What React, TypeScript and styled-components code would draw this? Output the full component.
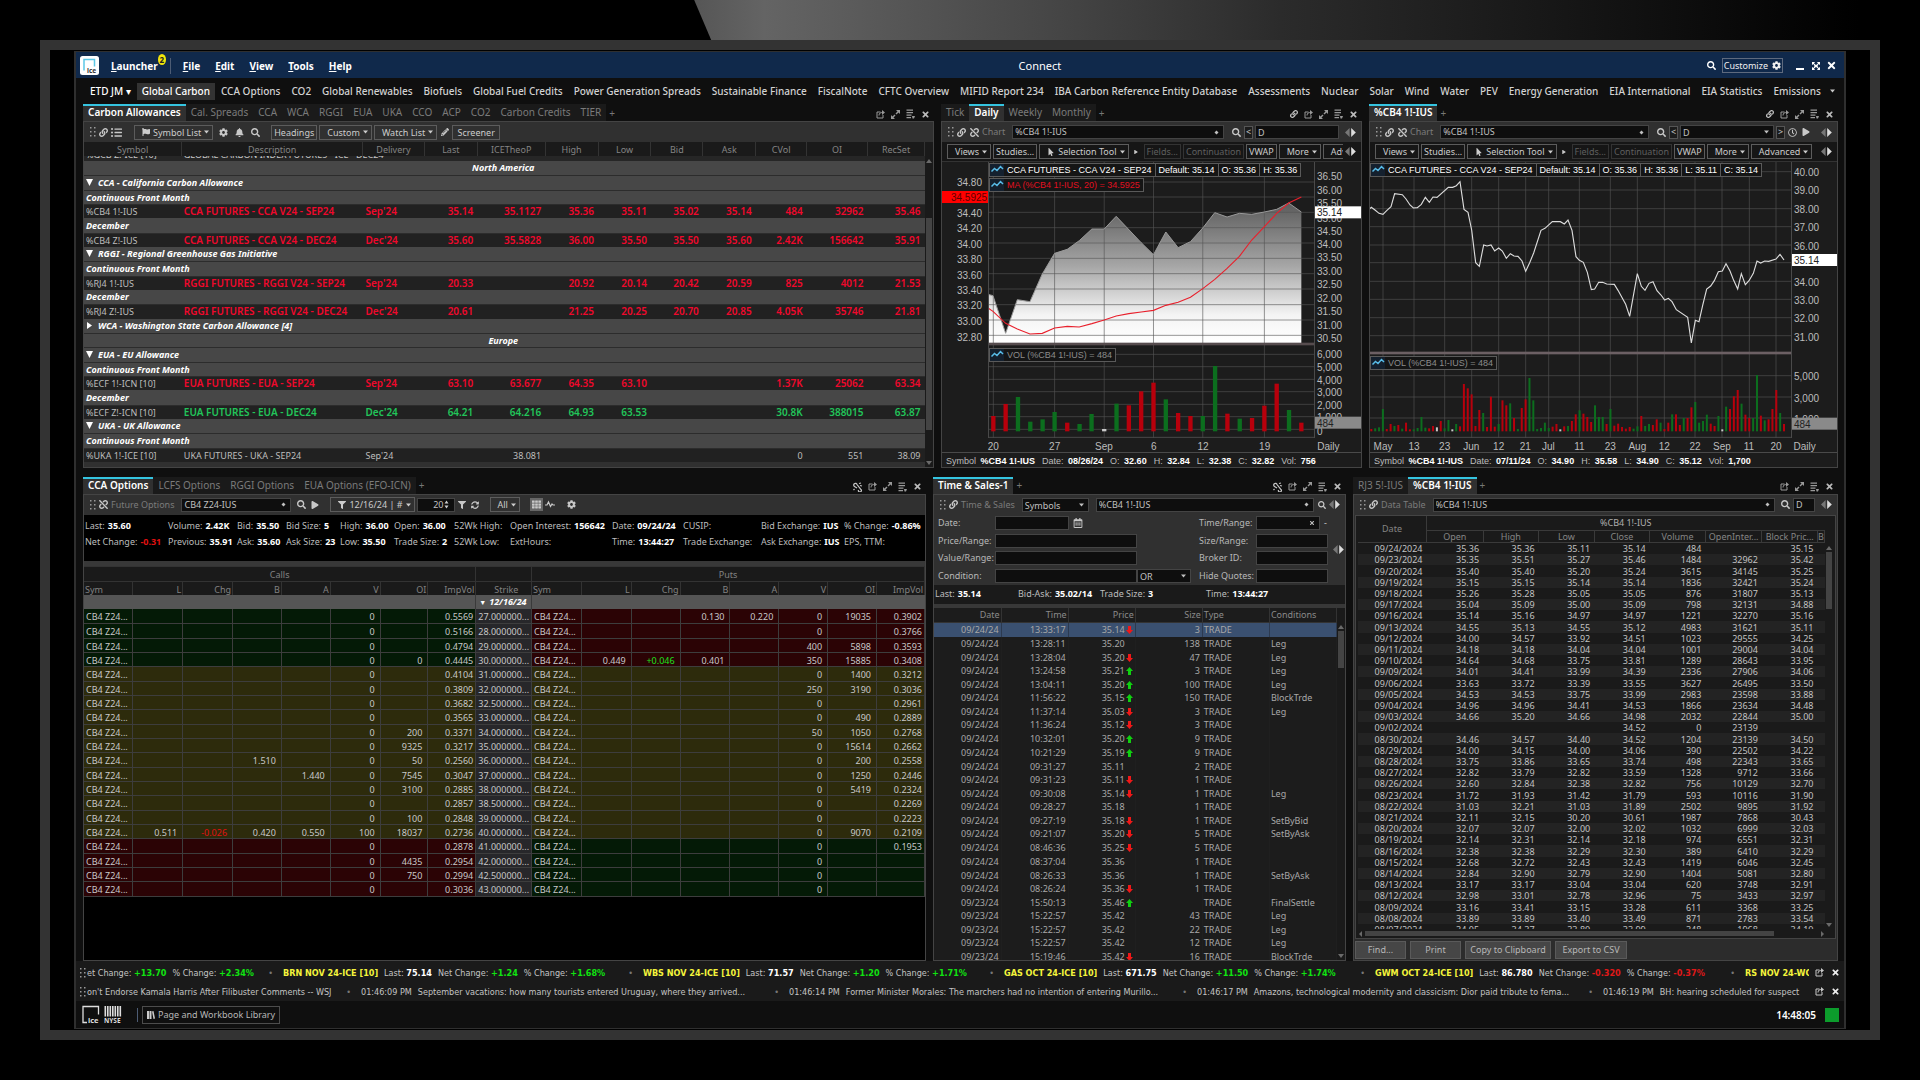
import React from "react";
import styled, { createGlobalStyle, css } from "styled-components";
import {
  FaSearch, FaCog, FaFlag, FaBell, FaPencilAlt, FaFilter, FaMousePointer, FaSyncAlt,
  FaLink, FaUnlink, FaRegClock, FaPlay, FaRegCalendarAlt, FaListUl, FaTh, FaTimes,
} from "react-icons/fa";

const ui = `"Noto Sans", "Open Sans", sans-serif`;
const plain = `"Liberation Sans", Arial, sans-serif`;
const tape = `"DejaVu Sans Condensed", "DejaVu Sans", sans-serif`;

const Global = createGlobalStyle`
  *, *::before, *::after { box-sizing: border-box; }
  html, body { margin: 0; background: #000; }
  body { font: 9px/14px ${ui}; color: #c8c8c8; overflow: hidden; }
  button, input, select { font: inherit; color: inherit; margin: 0; border-radius: 0; outline: none; }
  button { cursor: pointer; }
  table { border-collapse: collapse; table-layout: fixed; width: 100%; }
  th { font-weight: 400; }
  td, th { padding: 0; white-space: nowrap; overflow: hidden; }
  svg { flex: none; display: block; }
`;

/* ---------- shell ---------- */

const Sheen = styled.div`
  height: 40px;
  margin-left: 36%;
  clip-path: polygon(3px 0, 100% 0, 100% 100%, 20px 100%);
  background: linear-gradient(90deg, #555 0%, #646464 6%, #454545 30%, #2b2b2b 48%, #0e0e0e 80%, #000 95%);
`;
const Bezel = styled.div`
  height: calc(100vh - 80px);
  margin: 0 40px 40px;
  border: 10px solid #333;
  padding: 1px 24px;
  background: #000;
`;
const Win = styled.div`
  height: 100%;
  display: flex;
  flex-direction: column;
  border: 1px solid #2f2f2f;
  border-width: 1px 2px;
  background: #0f0f0f;
`;
const TitleBar = styled.header`
  flex: 0 0 26px;
  display: grid;
  grid-template-columns: 121fr auto 100fr;
  align-items: center;
  background: #10294b;
  color: #fff;
  padding: 1px 7px 0 4px;
`;
const MenuRow = styled.nav<{ $gap: number }>`
  display: flex;
  align-items: center;
  gap: ${(p) => p.$gap}px;
`;
const MenuButton = styled.button`
  background: none;
  border: 0;
  padding: 0;
  font-size: 10px;
  font-weight: 700;
  color: #fff;
  position: relative;
  &::first-letter { text-decoration: underline; }
`;
const Count = styled.span`
  position: absolute;
  top: -5px;
  left: 100%;
  width: 8px;
  height: 11px;
  border-radius: 50%;
  background: #f2e60a;
  color: #222;
  font: 700 8px/11px ${ui};
  text-align: center;
`;
const Rule = styled.span<{ $h?: number }>`
  width: 1px;
  height: ${(p) => p.$h ?? 16}px;
  background: #4d5c74;
`;
const AppTitle = styled.h1`
  margin: 0;
  font-size: 11px;
  font-weight: 400;
`;
const TitleTools = styled.div`
  display: flex;
  justify-content: flex-end;
  align-items: center;
  gap: 5px;
`;
const Customize = styled.button`
  display: flex;
  align-items: center;
  gap: 4px;
  height: 15px;
  padding: 0 1px;
  margin-right: 6px;
  background: none;
  border: 1px solid #5e6a7e;
  color: #f0f0f0;
`;
const IconButton = styled.button<{ $tone?: string }>`
  display: inline-flex;
  align-items: center;
  justify-content: center;
  flex: none;
  min-width: 11px;
  height: 13px;
  padding: 0;
  border: 0;
  background: none;
  color: ${(p) => p.$tone ?? "#c8c8c8"};
`;
const Books = styled.nav`
  flex: 0 0 26px;
  display: flex;
  align-items: center;
  justify-content: space-between;
  padding: 0 6px 0 9px;
`;
const Book = styled.button<{ $on?: boolean; $lead?: boolean }>`
  height: 17px;
  padding: 0 5px;
  border: 0;
  background: ${(p) => (p.$on ? "#333" : "none")};
  color: ${(p) => (p.$on || p.$lead ? "#fff" : "#d2d2d2")};
  font-size: 10px;
  font-weight: 500;
  white-space: nowrap;
`;
const Desk = styled.main`
  flex: 1 1 0;
  min-height: 0;
  display: flex;
  flex-direction: column;
  gap: 9px;
  padding: 0 6px 0 7px;
`;
const Band = styled.div<{ $grow: number; $cols: string }>`
  flex: ${(p) => p.$grow} 1 0;
  min-height: 0;
  display: grid;
  grid-template-rows: minmax(0, 1fr);
  grid-template-columns: ${(p) => p.$cols};
  gap: 7px;
`;

/* ---------- panel ---------- */

const PanelBox = styled.section`
  min-width: 0;
  display: flex;
  flex-direction: column;
`;
const TabBar = styled.div`
  flex: 0 0 17px;
  display: flex;
  align-items: stretch;
`;
const TabButton = styled.button<{ $on?: boolean }>`
  padding: 0 5px 2px;
  border: 0;
  border-top: 2px solid ${(p) => (p.$on ? "#35c4e0" : "#1a1a1a")};
  background: ${(p) => (p.$on ? "#303030" : "#1a1a1a")};
  color: ${(p) => (p.$on ? "#fff" : "#7a7a7a")};
  font-size: 10px;
  font-weight: ${(p) => (p.$on ? 600 : 400)};
  line-height: 13px;
  white-space: nowrap;
`;
const AddTab = styled.button`
  padding: 0 3px;
  border: 0;
  background: none;
  color: #777;
  font-size: 10px;
`;
const TabTools = styled.div`
  margin-left: auto;
  display: flex;
  align-items: center;
  gap: 4px;
  padding: 3px 3px 0 0;
`;
const PanelBody = styled.div<{ $bg?: string }>`
  flex: 1 1 0;
  min-height: 0;
  display: flex;
  flex-direction: column;
  overflow: hidden;
  border: 1px solid #444;
  background: ${(p) => p.$bg ?? "#1c1c1c"};
`;
const Toolbar = styled.div<{ $dark?: boolean }>`
  flex: 0 0 20px;
  display: flex;
  align-items: center;
  gap: 2px;
  padding: 0 5px;
  background: ${(p) => (p.$dark ? "#161616" : "#303030")};
  ${(p) => p.$dark && css`border-bottom: 1px solid #333;`}
`;
const Spacer = styled.span<{ $w?: number }>`
  flex: ${(p) => (p.$w ? `0 0 ${p.$w}px` : "1 1 0")};
`;
const ToolName = styled.label`
  color: #7b7b7b;
  white-space: nowrap;
  margin-right: 5px;
`;
const ToolButton = styled.button<{ $off?: boolean; $wide?: boolean }>`
  display: inline-flex;
  flex: none;
  align-items: center;
  justify-content: center;
  gap: 3px;
  height: 15px;
  padding: ${(p) => (p.$wide ? "0 3px 0 7px" : "0 2px")};
  border: 1px solid ${(p) => (p.$off ? "#333" : "#5c5c5c")};
  background: none;
  color: ${(p) => (p.$off ? "#5f5f5f" : "#cccccc")};
  white-space: nowrap;
  line-height: 13px;
`;
const FieldBox = styled.span<{ $w?: number }>`
  flex: ${(p) => (p.$w ? `0 0 ${p.$w}px` : "1 1 0")};
  min-width: 0;
  display: flex;
  align-items: center;
  height: 14px;
  padding: 0 4px 0 2px;
  border: 1px solid #444;
  background: #0e0e0e;
  color: #c0c0c0;
`;
const Entry = styled.input`
  flex: 1 1 0;
  width: 100%;
  min-width: 0;
  height: 12px;
  padding: 0;
  border: 0;
  background: none;
`;
const Pick = styled.select`
  appearance: none;
  flex: 1 1 0;
  min-width: 0;
  height: 12px;
  padding: 0;
  border: 0;
  background: #0e0e0e;
`;
const Step = styled.button`
  flex: none;
  width: 9px;
  height: 13px;
  padding: 0;
  border: 1px solid #555;
  background: #1c1c1c;
  line-height: 10px;
`;

const Caret = () => (
  <svg width="5" height="4" viewBox="0 0 5 4"><path d="M0 .5h5L2.5 3.5z" fill="currentColor" /></svg>
);
const Dot = () => (
  <svg width="5" height="5" viewBox="0 0 5 5"><path d="M2.5 .5l2 2-2 2-2-2z" fill="currentColor" /></svg>
);
const Grip = () => (
  <svg width="7" height="10" viewBox="0 0 7 10" fill="#999">
    {[0, 4, 8].map((y) => [1, 5].map((x) => <rect key={`${x}${y}`} x={x} y={y} width="1.5" height="1.5" />))}
  </svg>
);
const Pager = () => (
  <svg width="11" height="9" viewBox="0 0 11 9"><path d="M4.6 0v9L0 4.5z" fill="#777" /><path d="M6.2 0v9l4.6-4.5z" fill="#ddd" /></svg>
);
const Popout = () => (
  <svg width="9" height="9" viewBox="0 0 18 18" fill="none" stroke="currentColor" strokeWidth="2">
    <path d="M9 4H2v12h12v-6" /><path d="M6 11c0-5 3-6 8-6" /><path d="M12 0l6 5-6 5z" fill="currentColor" stroke="none" />
  </svg>
);
const Expand = () => (
  <svg width="9" height="9" viewBox="0 0 18 18" fill="currentColor">
    <path d="M10 0h8v8l-3-3-4 4-2-2 4-4zM8 18H0v-8l3 3 4-4 2 2-4 4z" />
  </svg>
);
const MenuLines = () => (
  <svg width="9" height="10" viewBox="0 0 18 20" fill="currentColor">
    <path d="M1 1h13v2.4H1zM1 6h13v2.4H1zM1 11h10v2.4H1zM1 16h9v2.4H1zM12 14h6l-2 5h-3z" />
  </svg>
);
const Wave = () => (
  <svg width="10" height="9" viewBox="0 0 20 18" fill="none" stroke="currentColor" strokeWidth="2.4"><path d="M0 10h4l3-6 4 9 3-5 2 2h4" /></svg>
);
const ChartMark = () => (
  <svg width="14" height="12" viewBox="0 0 28 24">
    <rect width="28" height="24" fill="#14202e" />
    <path d="M3 15l6-6 5 4 7-8 5 5" fill="none" stroke="#58bce8" strokeWidth="3" />
  </svg>
);
const Scissor = () => (
  <svg width="10" height="10" viewBox="0 0 20 20" fill="none" stroke="currentColor" strokeWidth="2.4">
    <path d="M8 12L3 9a3.4 3.4 0 1 1 5-4l8 10a3 3 0 1 1-5 1" /><path d="M12 3l4-1M14 7l4 1M3 14l-2 2" />
  </svg>
);

interface PanelProps {
  tabs: string[];
  active: number;
  linked?: "link" | "cut";
  bg?: string;
  children: React.ReactNode;
}
const Panel = ({ tabs, active, linked, bg, children }: PanelProps) => (
  <PanelBox>
    <TabBar role="tablist">
      {tabs.map((t, i) => (
        <TabButton key={t} role="tab" aria-selected={i === active} $on={i === active}>{t}</TabButton>
      ))}
      <AddTab aria-label="Add tab">+</AddTab>
      <TabTools>
        {linked === "link" && <IconButton aria-label="Linked"><FaLink size={8} /></IconButton>}
        {linked === "cut" && <IconButton aria-label="Unlinked"><Scissor /></IconButton>}
        <IconButton $tone="#999" aria-label="Pop out"><Popout /></IconButton>
        <IconButton $tone="#999" aria-label="Expand"><Expand /></IconButton>
        <IconButton $tone="#999" aria-label="Panel menu"><MenuLines /></IconButton>
        <IconButton $tone="#bbb" aria-label="Close"><FaTimes size={9} /></IconButton>
      </TabTools>
    </TabBar>
    <PanelBody $bg={bg}>{children}</PanelBody>
  </PanelBox>
);

/* ---------- scrollbars ---------- */

const Scrolled = styled.div`
  flex: 1 1 0;
  min-height: 0;
  display: flex;
  overflow: hidden;
`;
const ScrollArea = styled.div`
  flex: 1 1 0;
  min-width: 0;
  overflow: hidden;
`;
const Track = styled.div<{ $head: number }>`
  flex: 0 0 8px;
  display: flex;
  flex-direction: column;
  align-items: center;
  padding-top: ${(p) => p.$head}px;
  background: #1a1a1a;
  color: #6a6a6a;
`;
const Groove = styled.div`
  flex: 1 1 0;
  width: 6px;
  display: flex;
  flex-direction: column;
`;
const Thumb = styled.div<{ $part: number }>`
  flex: ${(p) => p.$part} 1 0;
  background: #444;
`;
const Gap = styled.div<{ $part: number }>`
  flex: ${(p) => p.$part} 1 0;
`;
const UpMark = () => <svg width="6" height="8" viewBox="0 0 6 8"><path d="M0 6h6L3 2z" fill="currentColor" /></svg>;
const DownMark = () => <svg width="6" height="8" viewBox="0 0 6 8"><path d="M0 2h6L3 6z" fill="currentColor" /></svg>;
const VScroll = ({ head, before, size, after }: { head: number; before: number; size: number; after: number }) => (
  <Track $head={head}>
    <UpMark />
    <Groove>
      <Gap $part={before} />
      <Thumb $part={size} />
      <Gap $part={after} />
    </Groove>
    <DownMark />
  </Track>
);

/* ---------- quote board ---------- */

const Board = styled.table`
  th {
    height: 14px;
    padding-top: 2px;
    line-height: 12px;
    border-right: 1px solid #333;
    background: #1a1a1a;
    color: #848484;
    text-align: center;
  }
`;
type Tone = "up" | "down" | "flat";
const toneColor = { up: "#22c55a", down: "#f0082c", flat: "#bdbdbd" };
const BoardRow = styled.tr<{ $kind: "group" | "quote" | "cut"; $tone?: Tone }>`
  height: 14px;
  &:nth-child(3n) { height: 15px; }
  ${(p) => p.$kind === "group" && css`
    background: #474747;
    color: #fff;
    font-weight: 700;
    font-style: italic;
    border-bottom: 1px solid #2c2c2c;
  `}
  ${(p) => p.$kind === "quote" && css`
    background: #212121;
    color: ${toneColor[p.$tone ?? "flat"]};
    font-weight: ${p.$tone === "flat" ? 400 : 600};
    font-size: ${p.$tone === "flat" ? 9 : 10}px;
  `}
  ${(p) => p.$kind === "cut" && css`
    && { height: 5px; }
    background: #262626;
  `}
  td { line-height: 13px; padding: 0 4px 0 2px; text-align: right; }
  td:first-child, td:nth-child(2) { text-align: left; }
  ${(p) => p.$kind === "quote" && css`
    td:first-child { font-weight: 400; font-size: 9px; color: #bdbdbd; }
  `}
  td:nth-child(3) { text-align: left; padding-left: 3px; }
`;
const Snip = styled.div`
  height: 5px;
  display: flex;
  align-items: flex-end;
  overflow: hidden;
  line-height: 12px;
`;
const GroupCell = styled.td<{ $center?: boolean }>`
  &&&& { text-align: ${(p) => (p.$center ? "center" : "left")}; }
`;
const Twist = styled.span`
  display: inline-block;
  width: 12px;
`;
const DownWedge = () => <svg width="7" height="7" viewBox="0 0 7 7"><path d="M0 0h7L3.500 7z" fill="currentColor" /></svg>;
const SideWedge = () => <svg width="7" height="7" viewBox="0 0 7 7"><path d="M1 0v7l5-3.500z" fill="currentColor" /></svg>;

const boardCols: [string, number][] = [
  ["Symbol", 98], ["Description", 181], ["Delivery", 62], ["Last", 53], ["ICETheoP", 68], ["High", 53],
  ["Low", 53], ["Bid", 52], ["Ask", 53], ["CVol", 51], ["OI", 61], ["RecSet", 57],
];
type BoardLine = { g: string; open?: boolean; center?: boolean } | { q: string[]; t: Tone };
const boardLines: BoardLine[] = [
  { g: "North America", center: true },
  { g: "CCA - California Carbon Allowance", open: true },
  { g: "Continuous Front Month" },
  { t: "down", q: ["%CB4 1!-IUS", "CCA FUTURES - CCA V24 - SEP24", "Sep'24", "35.14", "35.1127", "35.36", "35.11", "35.02", "35.14", "484", "32962", "35.46"] },
  { g: "December" },
  { t: "down", q: ["%CB4 Z!-IUS", "CCA FUTURES - CCA V24 - DEC24", "Dec'24", "35.60", "35.5828", "36.00", "35.50", "35.50", "35.60", "2.42K", "156642", "35.91"] },
  { g: "RGGI - Regional Greenhouse Gas Initiative", open: true },
  { g: "Continuous Front Month" },
  { t: "down", q: ["%RJ4 1!-IUS", "RGGI FUTURES - RGGI V24 - SEP24", "Sep'24", "20.33", "", "20.92", "20.14", "20.42", "20.59", "825", "4012", "21.53"] },
  { g: "December" },
  { t: "down", q: ["%RJ4 Z!-IUS", "RGGI FUTURES - RGGI V24 - DEC24", "Dec'24", "20.61", "", "21.25", "20.25", "20.70", "20.85", "4.05K", "35746", "21.81"] },
  { g: "WCA - Washington State Carbon Allowance [4]", open: false },
  { g: "Europe", center: true },
  { g: "EUA - EU Allowance", open: true },
  { g: "Continuous Front Month" },
  { t: "down", q: ["%ECF 1!-ICN [10]", "EUA FUTURES - EUA - SEP24", "Sep'24", "63.10", "63.677", "64.35", "63.10", "", "", "1.37K", "25062", "63.34"] },
  { g: "December" },
  { t: "up", q: ["%ECF Z!-ICN [10]", "EUA FUTURES - EUA - DEC24", "Dec'24", "64.21", "64.216", "64.93", "63.53", "", "", "30.8K", "388015", "63.87"] },
  { g: "UKA - UK Allowance", open: true },
  { g: "Continuous Front Month" },
  { t: "flat", q: ["%UKA 1!-ICE [10]", "UKA FUTURES - UKA - SEP24", "Sep'24", "", "38.081", "", "", "", "", "0", "551", "38.09"] },
];

const QuoteBoard = () => (
  <Panel tabs={["Carbon Allowances", "Cal. Spreads", "CCA", "WCA", "RGGI", "EUA", "UKA", "CCO", "ACP", "CO2", "Carbon Credits", "TIER"]} active={0} bg="#303030">
    <Toolbar>
      <Grip />
      <IconButton aria-label="Link"><FaLink size={9} /></IconButton>
      <IconButton aria-label="List"><FaListUl size={11} /></IconButton>
      <Spacer $w={8} />
      <ToolButton $wide><FaFlag size={8} />Symbol List<Caret /></ToolButton>
      <Spacer $w={1} />
      <IconButton aria-label="Settings"><FaCog size={9} /></IconButton>
      <Spacer $w={1} />
      <IconButton aria-label="Alerts"><FaBell size={9} /></IconButton>
      <Spacer $w={1} />
      <IconButton aria-label="Search"><FaSearch size={9} /></IconButton>
      <Spacer $w={6} />
      <ToolButton>Headings</ToolButton>
      <ToolButton $wide>Custom<Caret /></ToolButton>
      <ToolButton $wide>Watch List<Caret /></ToolButton>
      <IconButton aria-label="Edit"><FaPencilAlt size={8} /></IconButton>
      <ToolButton>&nbsp;Screener&nbsp;</ToolButton>
    </Toolbar>
    <Scrolled>
      <ScrollArea>
        <Board>
          <colgroup>{boardCols.map(([n, w]) => <col key={n} style={{ width: `${(w / 842) * 100}%` }} />)}</colgroup>
          <thead><tr>{boardCols.map(([n]) => <th key={n} scope="col">{n}</th>)}</tr></thead>
          <tbody>
            <BoardRow $kind="cut">
              <td><Snip>%GCB Z!-ICE [10]</Snip></td>
              <td colSpan={8}><Snip>GLOBAL CARBON INDEX FUTURES - ICE - DEC24</Snip></td>
              <td /><td /><td />
            </BoardRow>
            {boardLines.map((l, i) =>
              "g" in l ? (
                <BoardRow key={i} $kind="group">
                  <GroupCell colSpan={12} $center={l.center}>
                    {l.open !== undefined && <Twist>{l.open ? <DownWedge /> : <SideWedge />}</Twist>}
                    {l.g}
                  </GroupCell>
                </BoardRow>
              ) : (
                <BoardRow key={i} $kind="quote" $tone={l.t}>
                  {l.q.map((c, j) => <td key={j}>{c}</td>)}
                </BoardRow>
              ),
            )}
          </tbody>
        </Board>
      </ScrollArea>
      <VScroll head={15} before={52} size={210} after={28} />
    </Scrolled>
  </Panel>
);

/* ---------- charts ---------- */

const ChartArea = styled.div<{ $left: number }>`
  position: relative;
  flex: 0 0 276px;
  display: grid;
  grid-template-columns: ${(p) => (p.$left ? `${p.$left}px ` : "")}minmax(0, 1fr) ${(p) => (p.$left ? 47 : 46)}px;
  font-family: ${plain};
  svg.fill { width: 100%; height: 276px; overflow: hidden; }
`;
const Legend = styled.div<{ $x: number; $y: number; $tone?: string }>`
  position: absolute;
  left: ${(p) => p.$x}px;
  top: ${(p) => p.$y}px;
  display: flex;
  align-items: center;
  height: 14px;
  border: 1px solid #5a5a5a;
  background: #151515;
  color: ${(p) => p.$tone ?? "#fff"};
  font: 9px/12px ${plain};
  white-space: nowrap;
  span { padding: 0 3px; }
  span + span { border-left: 1px solid #5a5a5a; }
`;
const TimeAxis = styled.svg`
  flex: 0 0 15px;
  width: 100%;
  height: 15px;
  border-bottom: 1px solid #4a4a4a;
`;
const ChartStatus = styled.p`
  margin: 0;
  padding-left: 4px;
  font: 9px/16px ${plain};
  color: #bdbdbd;
  white-space: nowrap;
  b { color: #fff; margin: 0 7px 0 2px; }
`;

const top0 = 36;
const toPx = (v: number) => (v - top0) / 3;
type Label = [string, number];
type Bar = [number, "r" | "g" | "w", number];
const barFill = { r: "#b8000c", g: "#0c6e1e", w: "#c8c8c8" };

const Scale = ({ labels, tags, x, anchor }: { labels: Label[]; tags: { text: string; y: number; fill: string; ink: string }[]; x: number; anchor: "start" | "end" }) => (
  <svg className="fill" fontFamily="Liberation Sans, Arial, sans-serif" fontSize="10" fill="#bdbdbd">
    {anchor === "start" && <path d="M0.5 0V276" stroke="#4a4a4a" />}
    {labels.map(([t, y]) => <text key={t + y} x={x} y={toPx(y) + 4} textAnchor={anchor}>{t}</text>)}
    {tags.map((t) => (
      <g key={t.text}>
        <rect x={anchor === "start" ? 1 : 0} y={toPx(t.y) - 6} width="100%" height="12" fill={t.fill} />
        <text x={anchor === "start" ? x : "98%"} y={toPx(t.y) + 4} textAnchor={anchor} fill={t.ink}>{t.text}</text>
      </g>
    ))}
  </svg>
);

const Grid = ({ x0, x1, hs, vs }: { x0: number; x1: number; hs: number[]; vs: number[] }) => (
  <g stroke="rgba(84,84,84,.62)" strokeWidth="3">
    {hs.map((y) => <path key={y} d={`M${x0} ${y}H${x1}`} />)}
    {vs.map((x) => <path key={x} d={`M${x} 36V864`} />)}
  </g>
);
const Bars = ({ bars, w }: { bars: Bar[]; w: number }) => (
  <g>{bars.map(([x, c, y]) => <rect key={x} x={x - w / 2} y={y} width={w} height={844 - y} fill={barFill[c]} />)}</g>
);

const dailyLine = "204,433 219,437 257,550 292,449 330,455 367,372 404,310 442,298 478,272 516,237 553,237 589,199 664,278 701,314 738,246 775,293 812,275 849,234 885,188 922,201 959,190 996,193 1034,186 1071,178 1107,159 1145,186";
const dailyAverage = "204,474 219,484 257,520 292,537 330,552 367,550 404,534 442,529 478,531 516,521 553,510 589,498 627,491 664,486 701,481 738,466 775,457 812,442 849,416 885,388 922,355 959,319 996,270 1034,230 1071,190 1107,159 1145,141";
const dailyBars: Bar[] = [
  [220, "r", 798], [257, "r", 762], [294, "g", 741], [331, "g", 815], [368, "g", 808], [404, "g", 786], [442, "r", 818],
  [479, "g", 822], [515, "g", 792], [553, "w", 837], [590, "g", 761], [627, "r", 766], [664, "r", 724], [701, "r", 698],
  [738, "g", 748], [775, "r", 789], [812, "r", 798], [849, "g", 798], [886, "g", 648], [923, "r", 791], [960, "g", 806],
  [997, "r", 804], [1034, "r", 767], [1071, "r", 701], [1108, "g", 780], [1145, "r", 818],
];
const longLine = "27,178 34,172 45,180 57,190 69,193 80,182 93,170 104,131 127,134 138,147 150,165 160,174 172,173 184,163 196,142 208,157 219,141 231,142 265,112 278,112 289,107 300,95 312,178 324,187 335,240 347,338 358,349 371,285 381,288 393,285 404,303 416,294 427,303 439,325 451,311 462,318 474,319 486,333 497,364 509,338 521,309 543,241 555,235 577,215 601,215 613,222 624,210 636,241 648,320 658,331 670,337 682,367 694,419 704,417 716,397 728,397 740,402 763,403 774,421 797,463 809,499 832,371 844,409 855,421 867,400 879,395 891,422 903,435 914,450 925,445 936,455 949,479 983,502 994,579 1006,511 1017,515 1028,466 1040,417 1052,408 1063,392 1075,365 1087,363 1098,341 1110,363 1121,391 1133,417 1144,371 1156,404 1167,392 1180,370 1191,333 1202,339 1214,333 1226,334 1248,327 1260,313 1272,330";
const longBars: Bar[] = (
  "r837 g835 g832 g777 r837 r822 g828 r825 g836 r818 r838 g838 g834 g801 g833 r835 r828 w832 r813 g835 g810 w838 g822 r829 " +
  "r702 r715 r733 r828 r780 g789 r831 r740 r830 g822 r751 r766 g760 r804 g837 r774 r748 g684 g751 g837 g834 g818 g834 r830 " +
  "r822 w838 r829 g828 r813 r793 g781 r791 r801 r816 g766 g801 g801 r822 g777 r827 r821 r831 r836 r831 g836 g829 r798 g828 " +
  "g822 r825 r808 g818 r837 r818 g793 r793 r825 g804 r804 r772 g756 g818 g813 g794 r821 r828 g798 w838 g770 r777 r739 r720 " +
  "g761 r794 r804 g804 g675 r797 g811 r808 r777 r720 g789 r822"
).split(" ").map((s, i) => [34 + i * 11.57, s[0], Number(s.slice(1))] as Bar);

const TimeLabels = ({ labels, x0, daily, inset }: { labels: Label[]; x0: number; daily: number; inset: number }) => (
  <TimeAxis fontFamily="Liberation Sans, Arial, sans-serif" fontSize="10" fill="#bdbdbd">
    {labels.map(([t, x]) => <text key={x} x={`${((x - x0) / 3 / inset) * 100}%`} y="12" textAnchor="middle">{t}</text>)}
    <text x={`${((daily - x0) / 3 / inset) * 100}%`} y="12" textAnchor="middle">Daily</text>
  </TimeAxis>
);

const ClipRun = styled.span`
  flex: 1 1 0;
  min-width: 0;
  overflow: hidden;
  display: flex;
  gap: 2px;
`;
const ChartToolbars = ({ id, full }: { id: string; full?: boolean }) => (
  <>
    <Toolbar>
      <Grip />
      <IconButton aria-label="Link"><FaLink size={9} /></IconButton>
      <IconButton aria-label="Unlink"><FaUnlink size={9} /></IconButton>
      <ToolName htmlFor={id}>Chart</ToolName>
      <FieldBox><Entry id={id} defaultValue="%CB4 1!-IUS" /><Dot /></FieldBox>
      <Spacer $w={3} />
      <IconButton aria-label="Search"><FaSearch size={9} /></IconButton>
      <Step aria-label="Previous">&lt;</Step>
      <FieldBox $w={full ? 94 : 84}>
        <Pick aria-label="Interval" defaultValue="D"><option>D</option></Pick>
        {full && <Caret />}
      </FieldBox>
      {full && <Step aria-label="Next">&gt;</Step>}
      {full && <IconButton aria-label="History"><FaRegClock size={9} /></IconButton>}
      {full && <IconButton aria-label="Play"><FaPlay size={8} /></IconButton>}
      <Spacer $w={full ? 6 : 2} />
      <IconButton aria-label="More tools"><Pager /></IconButton>
    </Toolbar>
    <Toolbar $dark>
      <ToolButton $wide>Views<Caret /></ToolButton>
      <ToolButton>Studies...</ToolButton>
      <ToolButton $wide><FaMousePointer size={8} />Selection Tool<Caret /></ToolButton>
      <IconButton aria-label="Next tool"><FaPlay size={4} /></IconButton>
      <ToolButton $off>Fields...</ToolButton>
      <ToolButton $off>Continuation</ToolButton>
      <ToolButton>VWAP</ToolButton>
      <ToolButton $wide>More<Caret /></ToolButton>
      <ClipRun><ToolButton $wide>Advanced<Caret /></ToolButton></ClipRun>
      <IconButton aria-label="More tools"><Pager /></IconButton>
    </Toolbar>
  </>
);

const DailyChart = () => (
  <Panel tabs={["Tick", "Daily", "Weekly", "Monthly"]} active={1} linked="link">
    <ChartToolbars id="daily-symbol" />
    <ChartArea $left={46}>
      <Scale
        x={40}
        anchor="end"
        labels={[["34.80", 96], ["34.40", 189], ["34.20", 235], ["34.00", 281], ["33.80", 328], ["33.60", 374], ["33.40", 420], ["33.20", 466], ["33.00", 513], ["32.80", 560]]}
        tags={[{ text: "34.5925", y: 141, fill: "#ff0000", ink: "#5a0000" }]}
      />
      <svg className="fill" viewBox="204 36 979 828" preserveAspectRatio="none">
        <defs>
          <linearGradient id="fade" x1="0" y1="0" x2="0" y2="1">
            <stop offset="0" stopColor="#5c5c5c" />
            <stop offset=".45" stopColor="#a6a6a6" />
            <stop offset=".8" stopColor="#f4f4f4" />
            <stop offset="1" stopColor="#fff" />
          </linearGradient>
        </defs>
        <polygon points={`${dailyLine} 1145,579 204,579`} fill="url(#fade)" />
        <Grid x0={204} x1={1183} hs={[96, 141, 187, 233, 279, 325, 371, 417, 464, 510, 556, 613, 650, 688, 725, 763, 800, 838]} vs={[220, 404, 553, 701, 849, 1034]} />
        <polyline points={dailyLine} fill="none" stroke="#9a9a9a" strokeWidth="3" />
        <polyline points={dailyAverage} fill="none" stroke="#e8202c" strokeWidth="3.4" />
        <rect x="204" y="578" width="979" height="8" fill="#564c4e" />
        <Bars bars={dailyBars} w={13} />
        <path d="M204 862H1183" stroke="#4a4a4a" strokeWidth="3" />
        <path d="M205.500 36V864" stroke="#4a4a4a" strokeWidth="3" />
      </svg>
      <Scale
        x={3}
        anchor="start"
        labels={[
          ["36.50", 79], ["36.00", 119], ["35.50", 159], ["35.00", 204], ["34.50", 242], ["34.00", 281], ["33.50", 321], ["33.00", 362], ["32.50", 402],
          ["32.00", 443], ["31.50", 484], ["31.00", 525], ["30.50", 565], ["6,000", 613], ["5,000", 652], ["4,000", 690], ["3,000", 726], ["2,000", 764], ["1,000", 800], ["0", 843],
        ]}
        tags={[{ text: "35.14", y: 187, fill: "#fff", ink: "#222" }, { text: "484", y: 818, fill: "#8a8a8a", ink: "#222" }]}
      />
      <Legend $x={47} $y={1}>
        <ChartMark /><span>CCA FUTURES - CCA V24 - SEP24</span><span>Default: 35.14</span><span>O: 35.36</span><span>H: 35.36</span>
      </Legend>
      <Legend $x={47} $y={16} $tone="#e01020"><ChartMark /><span>MA (%CB4 1!-IUS, 20) = 34.5925</span></Legend>
      <Legend $x={47} $y={186} $tone="#8c8c8c"><ChartMark /><span>VOL (%CB4 1!-IUS) = 484</span></Legend>
    </ChartArea>
    <TimeLabels x0={66} inset={419} daily={1225} labels={[["20", 220], ["27", 404], ["Sep", 552], ["6", 701], ["12", 849], ["19", 1034]]} />
    <ChartStatus>
      Symbol <b>%CB4 1!-IUS</b>Date: <b>08/26/24</b>O: <b>32.60</b>H: <b>32.84</b>L: <b>32.38</b>C: <b>32.82</b>Vol: <b>756</b>
    </ChartStatus>
  </Panel>
);

const LongChart = () => (
  <Panel tabs={["%CB4 1!-IUS"]} active={0} linked="link">
    <ChartToolbars id="long-symbol" full />
    <ChartArea $left={0}>
      <svg className="fill" viewBox="30 36 1263 828" preserveAspectRatio="none">
        <Grid x0={27} x1={1293} hs={[65, 120, 176, 230, 285, 338, 394, 448, 503, 557, 677, 741, 804]} vs={[69, 162, 254, 335, 416, 497, 566, 658, 751, 832, 913, 1005, 1086, 1168, 1248]} />
        <polyline points={longLine} fill="none" stroke="#dcdcdc" strokeWidth="3.4" />
        <rect x="27" y="605" width="1266" height="8" fill="#6c6064" />
        <Bars bars={longBars} w={6} />
        <path d="M27 862H1293" stroke="#4a4a4a" strokeWidth="3" />
      </svg>
      <Scale
        x={3}
        anchor="start"
        labels={[["40.00", 66], ["39.00", 121], ["38.00", 177], ["37.00", 232], ["36.00", 287], ["34.00", 395], ["33.00", 450], ["32.00", 505], ["31.00", 560], ["5,000", 678], ["3,000", 743], ["1,000", 806]]}
        tags={[{ text: "35.14", y: 330, fill: "#fff", ink: "#222" }, { text: "484", y: 821, fill: "#8a8a8a", ink: "#222" }]}
      />
      <Legend $x={0} $y={1}>
        <ChartMark /><span>CCA FUTURES - CCA V24 - SEP24</span><span>Default: 35.14</span><span>O: 35.36</span><span>H: 35.36</span><span>L: 35.11</span><span>C: 35.14</span>
      </Legend>
      <Legend $x={0} $y={194} $tone="#8c8c8c"><ChartMark /><span>VOL (%CB4 1!-IUS) = 484</span></Legend>
    </ChartArea>
    <TimeLabels
      x0={30} inset={467} daily={1334}
      labels={[["May", 69], ["13", 162], ["23", 254], ["Jun", 334], ["12", 416], ["21", 496], ["Jul", 565], ["11", 658], ["23", 751], ["Aug", 832], ["12", 913], ["22", 1005], ["Sep", 1086], ["11", 1167], ["20", 1248]]}
    />
    <ChartStatus>
      Symbol <b>%CB4 1!-IUS</b>Date: <b>07/11/24</b>O: <b>34.90</b>H: <b>35.58</b>L: <b>34.90</b>C: <b>35.12</b>Vol: <b>1,700</b>
    </ChartStatus>
  </Panel>
);

/* ---------- options chain ---------- */

const Facts = styled.dl<{ $cols: string }>`
  flex: 0 0 46px;
  margin: 0;
  padding: 3px 1px 0;
  display: grid;
  grid-template-columns: ${(p) => p.$cols};
  grid-auto-rows: 16px;
  align-items: center;
  background: #000;
  white-space: nowrap;
`;
const Fact = styled.div`
  display: flex;
  gap: 3px;
  dt { color: #bdbdbd; }
  dd { margin: 0; color: #fff; font-weight: 700; }
`;
const SplitBar = styled.div<{ $h: number }>`
  flex: 0 0 ${(p) => p.$h}px;
  background: #383838;
`;
const Chain = styled.table`
  th {
    height: 14px;
    line-height: 11px;
    padding: 2px 1px 0;
    border: 1px solid #333;
    border-width: 1px 1px 0 0;
    background: #1a1a1a;
    color: #828282;
    text-align: right;
  }
  thead tr:first-child th { text-align: center; height: 15px; }
  th.sym { text-align: left; }
`;
const chainBg = { g: "#041a06", y: "#2d2b0c", r: "#2b0305" };
const ChainRow = styled.tr<{ $l: "g" | "y" | "r"; $r: "g" | "y" | "r" }>`
  height: 14px;
  &:nth-child(3n) { height: 15px; }
  td {
    border: 1px solid #3d3d3d;
    border-width: 0 1px 1px 0;
    line-height: 11px;
    text-align: right;
    padding: 2px 5px 0 0;
    background: ${(p) => chainBg[p.$l]};
  }
  td:nth-child(n + 10) { background: ${(p) => chainBg[p.$r]}; }
  td:nth-child(9) { background: #27272a; padding: 2px 0 0 2px; text-align: left; }
  td:nth-child(1), td:nth-child(10) { text-align: left; padding: 2px 0 0 2px; }
  td:nth-child(8), td:nth-child(17) { padding-right: 2px; }
`;
const ExpiryRow = styled.tr`
  height: 14px;
  background: #555;
  color: #fff;
  font-weight: 700;
  font-style: italic;
  td { line-height: 13px; }
  td + td { border-left: 1px solid #3a3a3a; }
  span { font-size: 7px; font-style: normal; margin: 0 3px; }
`;
const Delta = styled.span<{ $up: boolean }>`
  color: ${(p) => (p.$up ? "#1ee01e" : "#e01010")};
`;

const chainCols = [49, 50, 50, 49, 49, 50, 48, 48, 56, 50, 50, 49, 50, 49, 49, 49, 48];
const side = ["Sym", "L", "Chg", "B", "A", "V", "OI", "ImpVol"];
type Leg = [string, string, string, string, string, string, string];
const leg = (v: string, oi: string, iv: string, l = "", c = "", b = "", a = ""): Leg => [l, c, b, a, v, oi, iv];
const chain: [string, Leg, Leg][] = [
  ["27.000000...", leg("0", "", "0.5569"), leg("0", "19035", "0.3902", "", "", "0.130", "0.220")],
  ["28.000000...", leg("0", "", "0.5166"), leg("0", "", "0.3766")],
  ["29.000000...", leg("0", "", "0.4794"), leg("400", "5898", "0.3593")],
  ["30.000000...", leg("0", "0", "0.4445"), leg("350", "15885", "0.3408", "0.449", "+0.046", "0.401")],
  ["31.000000...", leg("0", "", "0.4104"), leg("0", "1400", "0.3212")],
  ["32.000000...", leg("0", "", "0.3809"), leg("250", "3190", "0.3036")],
  ["32.500000...", leg("0", "", "0.3682"), leg("0", "", "0.2961")],
  ["33.000000...", leg("0", "", "0.3565"), leg("0", "490", "0.2889")],
  ["34.000000...", leg("0", "200", "0.3371"), leg("50", "1050", "0.2768")],
  ["35.000000...", leg("0", "9325", "0.3217"), leg("0", "15614", "0.2662")],
  ["36.000000...", leg("0", "50", "0.2560", "", "", "1.510"), leg("0", "200", "0.2558")],
  ["37.000000...", leg("0", "7545", "0.3047", "", "", "", "1.440"), leg("0", "1250", "0.2446")],
  ["38.000000...", leg("0", "3100", "0.2885"), leg("0", "5419", "0.2324")],
  ["38.500000...", leg("0", "", "0.2857"), leg("0", "", "0.2269")],
  ["39.000000...", leg("0", "100", "0.2848"), leg("0", "", "0.2223")],
  ["40.000000...", leg("100", "18037", "0.2736", "0.511", "-0.026", "0.420", "0.550"), leg("0", "9070", "0.2109")],
  ["41.000000...", leg("0", "", "0.2878"), leg("0", "", "0.1953")],
  ["42.000000...", leg("0", "4435", "0.2954"), leg("0", "", "")],
  ["42.500000...", leg("0", "750", "0.2994"), leg("0", "", "")],
  ["43.000000...", leg("0", "", "0.3036"), leg("0", "", "")],
];
const legCells = (l: Leg) => l.map((v, i) => <td key={i}>{i === 1 && v ? <Delta $up={v[0] === "+"}>{v}</Delta> : v}</td>);

const optionFacts: [string, string][] = [
  ["Last:", "35.60"], ["Volume:", "2.42K"], ["Bid:", "35.50"], ["Bid Size:", "5"], ["High:", "36.00"], ["Open:", "36.00"], ["52Wk High:", ""],
  ["Open Interest:", "156642"], ["Date:", "09/24/24"], ["CUSIP:", ""], ["Bid Exchange:", "IUS"], ["% Change:", "-0.86%"],
  ["Net Change:", "-0.31"], ["Previous:", "35.91"], ["Ask:", "35.60"], ["Ask Size:", "23"], ["Low:", "35.50"], ["Trade Size:", "2"], ["52Wk Low:", ""],
  ["ExtHours:", ""], ["Time:", "13:44:27"], ["Trade Exchange:", ""], ["Ask Exchange:", "IUS"], ["EPS, TTM:", ""],
];

const ViewToggle = styled(IconButton)`
  width: 13px;
  background: #666;
`;
const CountEntry = styled(Entry)`
  text-align: right;
`;
const Spin = () => (
  <svg width="6" height="9" viewBox="0 0 6 9"><path d="M.5 3.500h4L2.500.5zM.5 5.500h4l-2 3z" fill="#ccc" /></svg>
);

const OptionsPanel = () => (
  <Panel tabs={["CCA Options", "LCFS Options", "RGGI Options", "EUA Options (EFO-ICN)"]} active={0} linked="cut" bg="#000">
    <Toolbar>
      <Grip />
      <IconButton aria-label="Unlink"><FaUnlink size={9} /></IconButton>
      <ToolName htmlFor="opt-symbol">Future Options</ToolName>
      <FieldBox $w={110}><Entry id="opt-symbol" defaultValue="CB4 Z24-IUS" /><Dot /></FieldBox>
      <Spacer $w={1} />
      <IconButton aria-label="Search"><FaSearch size={9} /></IconButton>
      <IconButton aria-label="Play"><FaPlay size={8} /></IconButton>
      <Spacer $w={6} />
      <ToolButton $wide><FaFilter size={8} />12/16/24 | #<Caret /></ToolButton>
      <FieldBox $w={38}><CountEntry aria-label="Strikes" defaultValue="20" /><Spin /></FieldBox>
      <IconButton aria-label="Filter"><FaFilter size={8} /></IconButton>
      <IconButton aria-label="Refresh"><FaSyncAlt size={8} /></IconButton>
      <Spacer $w={5} />
      <ToolButton $wide>All<Caret /></ToolButton>
      <Spacer $w={6} />
      <ViewToggle aria-label="Grid view"><FaTh size={9} /></ViewToggle>
      <IconButton aria-label="Curve view"><Wave /></IconButton>
      <Spacer $w={6} />
      <IconButton aria-label="Settings"><FaCog size={9} /></IconButton>
    </Toolbar>
    <Facts $cols="83px 69px 49px 54px 54px 60px 56px 102px 71px 78px 83px auto">
      {optionFacts.map(([k, v]) => (
        <Fact key={k}><dt>{k}</dt><dd>{v === "-0.31" ? <Delta $up={false}>{v}</Delta> : v}</dd></Fact>
      ))}
    </Facts>
    <SplitBar $h={5} />
    <Chain>
      <colgroup>{chainCols.map((w, i) => <col key={i} style={{ width: `${(w / 843) * 100}%` }} />)}</colgroup>
      <thead>
        <tr><th colSpan={8}>Calls</th><th /><th colSpan={8}>Puts</th></tr>
        <tr>
          {side.map((s) => <th key={s} className={s === "Sym" ? "sym" : undefined}>{s}</th>)}
          <th>Strike&nbsp;&nbsp;&nbsp;&nbsp;&nbsp;</th>
          {side.map((s) => <th key={s} className={s === "Sym" ? "sym" : undefined}>{s}</th>)}
        </tr>
      </thead>
      <tbody>
        <ExpiryRow><td colSpan={8} /><td><span>▼</span>12/16/24</td><td colSpan={8} /></ExpiryRow>
        {chain.map(([k, c, p], i) => {
          const mid = i > 3 && i < 16;
          return (
            <ChainRow key={k} $l={mid ? "y" : i < 4 ? "g" : "r"} $r={mid ? "y" : i < 4 ? "r" : "g"}>
              <td>CB4 Z24...</td>{legCells(c)}<td>{k}</td><td>CB4 Z24...</td>{legCells(p)}
            </ChainRow>
          );
        })}
      </tbody>
    </Chain>
  </Panel>
);

/* ---------- time & sales ---------- */

const FilterForm = styled.form`
  flex: 0 0 70px;
  display: flex;
  align-items: center;
  background: #303030;
  padding: 0 1px 0 4px;
`;
const FilterGrid = styled.div`
  flex: 1 1 0;
  min-width: 0;
  height: 100%;
  display: grid;
  grid-template-columns: 57px 142px 54px minmax(8px, 1fr) 57px 72px;
  grid-template-rows: repeat(4, minmax(0, 1fr));
  align-items: center;
  white-space: nowrap;
  label { color: #b8b8b8; }
`;
const DateCell = styled.span`
  display: flex;
  align-items: center;
  gap: 4px;
`;
const Tail = styled.span`
  display: flex;
  justify-content: flex-end;
  width: 16px;
`;
const Sales = styled.table`
  color: #a8a8a8;
  th { height: 15px; border: 1px solid #333; border-width: 0 1px 1px 0; color: #8a8a8a; line-height: 13px; text-align: right; padding: 0 1px; }
  th:nth-child(n + 5) { text-align: left; }
  td { line-height: 12px; text-align: right; padding: 0 2px; }
  td:nth-child(n + 5) { text-align: left; padding-left: 1px; }
`;
const SaleRow = styled.tr<{ $on: boolean }>`
  height: 13px;
  &:nth-child(2n + 1), &:nth-child(8n + 2) { height: 14px; }
  background: ${(p) => (p.$on ? "#3a5070" : "#1c1c1c")};
  td { border-right: 1px solid ${(p) => (p.$on ? "#2c3a50" : "#1f1f1f")}; }
`;
const PriceCell = styled.span`
  display: flex;
  align-items: center;
  justify-content: flex-end;
  gap: 1px;
`;
const Tick = ({ dir }: { dir: string }) => (
  <svg width="7" height="8" viewBox="0 0 7 8">
    {dir === "u" && <path d="M3.500 0L7 4H5v4H2V4H0z" fill="#10d010" />}
    {dir === "d" && <path d="M3.500 8L0 4h2V0h3v4h2z" fill="#f01818" />}
  </svg>
);
const sales = `13:33:17 35.14 d 3 -
13:28:11 35.20 - 138 Leg
13:28:04 35.20 d 47 Leg
13:24:58 35.21 u 3 Leg
13:04:11 35.20 u 100 Leg
11:56:22 35.15 u 150 BlockTrde
11:37:14 35.03 d 3 Leg
11:36:24 35.12 d 3 -
10:32:01 35.20 u 9 -
10:21:29 35.19 u 9 -
09:31:27 35.11 - 2 -
09:31:23 35.11 d 1 -
09:30:08 35.14 d 1 Leg
09:28:27 35.18 - 1 -
09:27:19 35.18 d 1 SetByBid
09:21:07 35.20 d 5 SetByAsk
08:46:36 35.25 d 5 -
08:37:04 35.36 - 1 -
08:26:33 35.36 - 1 SetByAsk
08:26:24 35.36 d 1 -
15:50:13 35.46 u - FinalSettle
15:22:57 35.42 - 43 Leg
15:22:57 35.42 - 22 Leg
15:22:57 35.42 - 12 Leg
15:19:46 35.42 d 16 BlockTrde`.split("\n").map((l) => l.split(" "));
const dash = (s: string) => (s === "-" ? "" : s);

const SalesFacts = styled(Facts)`
  flex-basis: 19px;
  padding-top: 1px;
  background: #1a1a1a;
`;

const TimeSales = () => (
  <Panel tabs={["Time & Sales-1"]} active={0} linked="cut">
    <Toolbar>
      <Grip />
      <IconButton aria-label="Link"><FaLink size={9} /></IconButton>
      <ToolName htmlFor="ts-kind">Time &amp; Sales</ToolName>
      <FieldBox $w={67}>
        <Pick id="ts-kind" defaultValue="Symbols"><option>Symbols</option></Pick><Caret />
      </FieldBox>
      <Spacer $w={3} />
      <FieldBox><Entry aria-label="Symbol" defaultValue="%CB4 1!-IUS" /><Dot /></FieldBox>
      <IconButton aria-label="Search"><FaSearch size={8} /></IconButton>
      <IconButton aria-label="More tools"><Pager /></IconButton>
    </Toolbar>
    <FilterForm>
      <FilterGrid>
        <label htmlFor="f-date">Date:</label>
        <DateCell><FieldBox $w={74}><Entry id="f-date" /></FieldBox><FaRegCalendarAlt size={10} /></DateCell>
        <span /><span />
        <label htmlFor="f-time">Time/Range:</label>
        <DateCell><FieldBox $w={64}><Entry id="f-time" /><FaTimes size={6} /></FieldBox>-</DateCell>

        <label htmlFor="f-price">Price/Range:</label>
        <FieldBox><Entry id="f-price" /></FieldBox>
        <span /><span />
        <label htmlFor="f-size">Size/Range:</label>
        <FieldBox><Entry id="f-size" /></FieldBox>

        <label htmlFor="f-value">Value/Range:</label>
        <FieldBox><Entry id="f-value" /></FieldBox>
        <span /><span />
        <label htmlFor="f-broker">Broker ID:</label>
        <FieldBox><Entry id="f-broker" /></FieldBox>

        <label htmlFor="f-cond">Condition:</label>
        <FieldBox><Entry id="f-cond" /></FieldBox>
        <FieldBox><Pick aria-label="Condition join" defaultValue="OR"><option>OR</option></Pick><Caret /></FieldBox>
        <span />
        <label htmlFor="f-hide">Hide Quotes:</label>
        <FieldBox><Entry id="f-hide" /></FieldBox>
      </FilterGrid>
      <Tail><Pager /></Tail>
    </FilterForm>
    <SalesFacts $cols="83px 82px 106px auto">
      <Fact><dt>Last:</dt><dd>35.14</dd></Fact>
      <Fact><dt>Bid-Ask:</dt><dd>35.02/14</dd></Fact>
      <Fact><dt>Trade Size:</dt><dd>3</dd></Fact>
      <Fact><dt>Time:</dt><dd>13:44:27</dd></Fact>
    </SalesFacts>
    <SplitBar $h={4} />
    <Scrolled>
      <ScrollArea>
        <Sales>
          <thead><tr>{["Date", "Time", "Price", "Size", "Type", "Conditions"].map((h) => <th key={h} scope="col">{h}</th>)}</tr></thead>
          <tbody>
            {sales.map(([t, p, d, s, c], i) => (
              <SaleRow key={i} $on={i === 0}>
                <td>{i < 20 ? "09/24/24" : "09/23/24"}</td>
                <td>{t}</td>
                <td><PriceCell>{p}<Tick dir={d} /></PriceCell></td>
                <td>{dash(s)}</td>
                <td>TRADE</td>
                <td>{dash(c)}</td>
              </SaleRow>
            ))}
          </tbody>
        </Sales>
      </ScrollArea>
      <VScroll head={15} before={0} size={37} after={285} />
    </Scrolled>
  </Panel>
);

/* ---------- history table ---------- */

const HistoryFrame = styled.div`
  flex: 1 1 0;
  min-height: 0;
  display: flex;
  flex-direction: column;
  margin: 0 1px;
  padding: 0 2px;
  border: 1px solid #444;
  background: #1a1a1a;
`;
const History = styled.table`
  color: #c2c2c2;
  th { border: 1px solid #3a3a3a; border-width: 0 1px 1px 0; height: 12px; line-height: 10px; color: #858585; }
  thead tr:first-child th { height: 15px; }
  thead tr:first-child th + th { color: #b0b0b0; border-right: 0; }
  td { text-align: right; padding-right: 4px; line-height: 11px; }
  tbody tr { height: 11px; }
  tbody tr:nth-child(5n + 3) { height: 12px; }
  tbody tr:nth-child(even) { background: #232323; }
`;
const HScroll = styled.div`
  flex: 0 0 9px;
  display: flex;
  align-items: center;
  gap: 2px;
  color: #6a6a6a;
  div { flex: 1 1 0; height: 5px; background: linear-gradient(90deg, #444 90%, transparent 90%); }
`;
const Actions = styled.div`
  flex: 0 0 21px;
  display: flex;
  gap: 4px;
  align-items: center;
  padding: 1px 1px 0;
`;
const ActionButton = styled.button<{ $w: number }>`
  min-width: ${(p) => p.$w}px;
  height: 18px;
  padding: 0 2px;
  border: 1px solid #5a5a5a;
  background: #464646;
  color: #b8b8b8;
`;
const history = `09/24/2024 35.36 35.36 35.11 35.14 484 - 35.15
09/23/2024 35.35 35.51 35.27 35.46 1484 32962 35.42
09/20/2024 35.40 35.40 35.20 35.24 3615 34145 35.25
09/19/2024 35.15 35.15 35.14 35.14 1836 32421 35.24
09/18/2024 35.26 35.28 35.05 35.05 876 31807 35.13
09/17/2024 35.04 35.09 35.00 35.09 798 32131 34.88
09/16/2024 35.14 35.16 34.97 34.97 1221 32270 35.16
09/13/2024 34.55 35.13 34.55 35.12 4983 31621 35.11
09/12/2024 34.00 34.57 33.92 34.51 1023 29555 34.25
09/11/2024 34.18 34.18 34.04 34.04 1001 29004 34.04
09/10/2024 34.64 34.68 33.75 33.81 1289 28643 33.95
09/09/2024 34.01 34.41 33.99 34.39 2336 27906 34.06
09/06/2024 33.63 33.72 33.39 33.55 3627 26495 33.50
09/05/2024 34.53 34.53 33.75 33.99 2983 23598 33.88
09/04/2024 34.96 34.96 34.41 34.53 1866 23634 34.48
09/03/2024 34.66 35.20 34.66 34.98 2032 22844 35.00
09/02/2024 - - - 34.52 0 23139 -
08/30/2024 34.46 34.57 34.40 34.52 1204 23139 34.50
08/29/2024 34.00 34.15 34.00 34.06 390 22502 34.22
08/28/2024 33.75 33.86 33.65 33.74 498 22343 33.65
08/27/2024 32.82 33.79 32.82 33.59 1328 9712 33.66
08/26/2024 32.60 32.84 32.38 32.82 756 10129 32.70
08/23/2024 31.72 31.93 31.42 31.79 593 10116 31.90
08/22/2024 31.03 32.21 31.03 31.89 2502 9895 31.92
08/21/2024 32.11 32.15 30.20 30.61 1987 7868 30.43
08/20/2024 32.07 32.07 32.00 32.02 1032 6999 32.03
08/19/2024 32.14 32.31 32.14 32.18 974 6551 32.31
08/16/2024 32.38 32.38 32.29 32.30 389 6410 32.29
08/15/2024 32.68 32.72 32.43 32.43 1419 6046 32.45
08/14/2024 32.84 32.90 32.79 32.90 1404 5081 32.80
08/13/2024 33.17 33.17 33.04 33.04 620 3748 32.91
08/12/2024 32.98 33.01 32.78 32.96 75 3433 32.97
08/09/2024 33.16 33.41 33.15 33.28 611 3368 33.25
08/08/2024 33.89 33.89 33.40 33.49 871 2783 33.54
08/07/2024 34.05 34.37 33.80 33.99 348 1968 34.10`.split("\n").map((l) => l.split(" "));
const historyCols = [69, 57, 56, 56, 56, 56, 57, 56, 7];

const DataTable = () => (
  <Panel tabs={["RJ3 5!-IUS", "%CB4 1!-IUS"]} active={1} bg="#2c2c2c">
    <Toolbar>
      <Grip />
      <IconButton aria-label="Link"><FaLink size={9} /></IconButton>
      <ToolName htmlFor="dt-symbol">Data Table</ToolName>
      <FieldBox><Entry id="dt-symbol" defaultValue="%CB4 1!-IUS" /><Dot /></FieldBox>
      <Spacer $w={1} />
      <IconButton aria-label="Search"><FaSearch size={9} /></IconButton>
      <FieldBox $w={22}><Entry aria-label="Interval" defaultValue="D" /></FieldBox>
      <Spacer $w={2} />
      <IconButton aria-label="More tools"><Pager /></IconButton>
    </Toolbar>
    <HistoryFrame>
      <Scrolled>
        <ScrollArea>
          <History>
            <colgroup>{historyCols.map((w, i) => <col key={i} style={{ width: `${(w / 470) * 100}%` }} />)}</colgroup>
            <thead>
              <tr><th rowSpan={2}>Date</th><th colSpan={8}>%CB4 1!-IUS</th></tr>
              <tr>{["Open", "High", "Low", "Close", "Volume", "OpenInter...", "Block Pric...", "B"].map((h) => <th key={h} scope="col">{h}</th>)}</tr>
            </thead>
            <tbody>
              {history.map((r) => <tr key={r[0]}>{r.map((c, j) => <td key={j}>{dash(c)}</td>)}<td /></tr>)}
            </tbody>
          </History>
        </ScrollArea>
        <VScroll head={28} before={0} size={58} after={312} />
      </Scrolled>
      <HScroll>
        <svg width="5" height="6" viewBox="0 0 5 6"><path d="M4 0v6L1 3z" fill="currentColor" /></svg>
        <div />
        <svg width="12" height="6" viewBox="0 0 12 6"><path d="M0 0v6l3-3z" fill="currentColor" /></svg>
      </HScroll>
    </HistoryFrame>
    <Actions>
      <ActionButton $w={51}>Find...</ActionButton>
      <ActionButton $w={51}>Print</ActionButton>
      <ActionButton $w={86}>Copy to Clipboard</ActionButton>
      <ActionButton $w={72}>Export to CSV</ActionButton>
    </Actions>
  </Panel>
);

/* ---------- tickers and footer ---------- */

const Tickers = styled.section`
  flex: 0 0 39px;
  padding: 2px 3px 0;
  background: #1a1a1a;
`;
const TickerRow = styled.div`
  height: 19px;
  display: flex;
  align-items: center;
  gap: 1px;
  font: 9px/18px ${tape};
  color: #c4c4c4;
  > button { margin-left: 4px; }
`;
const TickerRun = styled.div<{ $lead: string }>`
  flex: 1 1 0;
  min-width: 0;
  overflow: hidden;
  display: grid;
  grid-template-columns: ${(p) => p.$lead};
  white-space: nowrap;
`;
const TickerItem = styled.span`
  display: flex;
  gap: 6px;
  overflow: hidden;
  b { color: #fff; }
  b.name { color: #f4f43c; }
  b.up { color: #10e410; }
  b.down { color: #e01818; }
  i { margin-left: auto; padding-right: 10px; font-style: normal; color: #777; }
`;
const quotes: [string, string, string, string, boolean][] = [
  ["BRN NOV 24-ICE [10]", "75.14", "+1.24", "+1.68%", true],
  ["WBS NOV 24-ICE [10]", "71.57", "+1.20", "+1.71%", true],
  ["GAS OCT 24-ICE [10]", "671.75", "+11.50", "+1.74%", true],
  ["GWM OCT 24-ICE [10]", "86.780", "-0.320", "-0.37%", false],
  ["RS NOV 24-WCE", "", "", "", true],
];
const news: [string, string][] = [
  ["01:46:09 PM", "September vacations: how many tourists entered Uruguay, where they arrived..."],
  ["01:46:14 PM", "Former Minister Morales: The marchers had no intention of entering Murillo..."],
  ["01:46:17 PM", "Amazons, technological modernity and classicism: Dior paid tribute to fema..."],
  ["01:46:19 PM", "BH: hearing scheduled for suspect"],
];
const Footer = styled.footer`
  flex: 0 0 27px;
  display: flex;
  align-items: center;
  gap: 4px;
  padding: 0 5px 0 6px;
`;
const Library = styled.button`
  display: flex;
  align-items: center;
  gap: 3px;
  height: 18px;
  padding: 0 4px;
  border: 1px solid #4c4c4c;
  background: none;
  color: #b8b8b8;
`;
const Clock = styled.time`
  margin-left: auto;
  color: #fff;
  font-size: 10px;
  font-weight: 600;
`;
const Lamp = styled.span`
  width: 14px;
  height: 14px;
  margin-left: 5px;
  background: #0c9c2c;
`;
const IceBadge = () => (
  <svg width="19" height="19" viewBox="0 0 38 38" fontFamily="Noto Sans, sans-serif" fontWeight="700">
    <rect width="38" height="38" rx="5" fill="#fff" />
    <path d="M8 29V7h21v14" fill="none" stroke="#5cc8e6" strokeWidth="3" />
    <text x="14" y="34" fontSize="13" fill="#333">ice</text>
  </svg>
);
const IceMark = () => (
  <svg width="18" height="19" viewBox="0 0 36 38" fontFamily="Noto Sans, sans-serif" fontWeight="700" fill="#ddd">
    <path d="M10 35H2V3h31v16" fill="none" stroke="#ddd" strokeWidth="2.600" />
    <text x="12" y="36" fontSize="15">ice</text>
  </svg>
);
const NyseMark = () => (
  <svg width="18" height="19" viewBox="0 0 36 38" fontFamily="Noto Sans, sans-serif" fontWeight="700" fill="#ddd">
    {[0, 5, 10, 15, 20, 25, 30].map((x) => <rect key={x} x={x + 1} y="2" width="3.200" height="21" />)}
    <text x="0" y="36" fontSize="13">NYSE</text>
  </svg>
);
const Shelf = () => (
  <svg width="8" height="10" viewBox="0 0 16 20" fill="#ccc"><path d="M0 2h4v16H0zM5 2h4v16H5zM10 3l3-1 3 15-3 1z" /></svg>
);

const books = [
  "CCA Options", "CO2", "Global Renewables", "Biofuels", "Global Fuel Credits", "Power Generation Spreads", "Sustainable Finance", "FiscalNote",
  "CFTC Overview", "MIFID Report 234", "IBA Carbon Reference Entity Database", "Assessments", "Nuclear", "Solar", "Wind", "Water", "PEV",
  "Energy Generation", "EIA International", "EIA Statistics", "Emissions",
];

const RowTools = () => (
  <>
    <IconButton aria-label="Pop out ticker"><Popout /></IconButton>
    <IconButton $tone="#eee" aria-label="Close ticker"><FaTimes size={9} /></IconButton>
  </>
);

export default function App() {
  return (
    <>
      <Global />
      <Sheen />
      <Bezel>
        <Win>
          <TitleBar>
            <MenuRow $gap={12}>
              <IceBadge />
              <MenuButton>Launcher<Count>2</Count></MenuButton>
              <Rule />
              <MenuRow $gap={15}>
                {["File", "Edit", "View", "Tools", "Help"].map((m) => <MenuButton key={m}>{m}</MenuButton>)}
              </MenuRow>
            </MenuRow>
            <AppTitle>Connect</AppTitle>
            <TitleTools>
              <IconButton $tone="#fff" aria-label="Search"><FaSearch size={9} /></IconButton>
              <Customize>Customize<FaCog size={9} /></Customize>
              <IconButton $tone="#fff" aria-label="Minimize"><svg width="8" height="10" viewBox="0 0 8 10"><path d="M0 7h8v2H0z" fill="currentColor" /></svg></IconButton>
              <IconButton $tone="#fff" aria-label="Restore">
                <svg width="8" height="8" viewBox="0 0 16 16" fill="currentColor"><path d="M0 0h6L4 3l4 3 4-3-2-3h6v6l-3-2-2 4 2 4 3-2v6h-6l2-3-4-3-4 3 2 3H0v-6l3 2 2-4-2-4-3 2z" /></svg>
              </IconButton>
              <IconButton $tone="#fff" aria-label="Close"><FaTimes size={11} /></IconButton>
            </TitleTools>
          </TitleBar>
          <Books>
            <Book $lead>ETD JM ▾</Book>
            <Book $on>Global Carbon</Book>
            {books.map((b) => <Book key={b}>{b}</Book>)}
            <IconButton aria-label="More workbooks"><Caret /></IconButton>
          </Books>
          <Desk>
            <Band $grow={364} $cols="minmax(0, 851fr) minmax(0, 421fr) minmax(0, 469fr)">
              <QuoteBoard />
              <DailyChart />
              <LongChart />
            </Band>
            <Band $grow={485} $cols="minmax(0, 843fr) minmax(0, 413fr) minmax(0, 485fr)">
              <OptionsPanel />
              <TimeSales />
              <DataTable />
            </Band>
          </Desk>
          <Tickers>
            <TickerRow>
              <Grip />
              <TickerRun $lead="196px 360px 361px 371px 370px 66px">
                <TickerItem><span>et Change: <b className="up">+13.70</b></span><span>% Change: <b className="up">+2.34%</b></span><i>•</i></TickerItem>
                {quotes.map(([n, l, c, p, up]) => (
                  <TickerItem key={n}>
                    <b className="name">{n}</b>
                    {l && (
                      <>
                        <span>Last: <b>{l}</b></span>
                        <span>Net Change: <b className={up ? "up" : "down"}>{c}</b></span>
                        <span>% Change: <b className={up ? "up" : "down"}>{p}</b></span>
                        <i>•</i>
                      </>
                    )}
                  </TickerItem>
                ))}
              </TickerRun>
              <RowTools />
            </TickerRow>
            <TickerRow>
              <Grip />
              <TickerRun $lead="274px 428px 408px 406px minmax(0, 1fr)">
                <TickerItem><span>on't Endorse Kamala Harris After Filibuster Comments -- WSJ</span><i>•</i></TickerItem>
                {news.map(([t, n]) => <TickerItem key={t}><span>{t}</span><span>{n}</span>{t !== "01:46:19 PM" && <i>•</i>}</TickerItem>)}
              </TickerRun>
              <RowTools />
            </TickerRow>
          </Tickers>
          <Footer>
            <IceMark />
            <NyseMark />
            <Spacer $w={7} />
            <Rule $h={14} />
            <Library><Shelf />Page and Workbook Library</Library>
            <Clock>14:48:05</Clock>
            <Lamp />
          </Footer>
        </Win>
      </Bezel>
    </>
  );
}
